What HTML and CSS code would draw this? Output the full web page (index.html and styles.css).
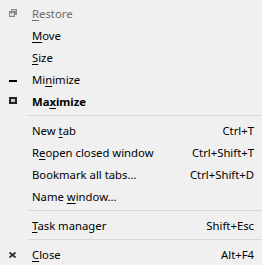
FILE: index.html
```html
<!DOCTYPE html>
<html>
<head>
<meta charset="utf-8">
<link rel="stylesheet" href="styles.css">
</head>
<body>
<div class="menu">
  <div class="item disabled">
    <span class="icon"><svg width="8" height="8" viewBox="0 0 8 8"><path d="M2 0h6v6h-2v-4h-4z" fill="#8a8a8a"/><rect x="0" y="2" width="6" height="6" fill="#8a8a8a"/><rect x="1" y="4" width="4" height="3" fill="#d8d8d8"/><rect x="3" y="1" width="4" height="1" fill="#d8d8d8"/></svg></span>
    <span class="label"><u>R</u>estore</span>
  </div>
  <div class="item"><span class="icon"></span><span class="label"><u>M</u>ove</span></div>
  <div class="item"><span class="icon"></span><span class="label"><u>S</u>ize</span></div>
  <div class="item">
    <span class="icon"><svg width="8" height="8" viewBox="0 0 8 8"><rect x="0" y="5" width="8" height="2" fill="#000"/></svg></span>
    <span class="label">Mi<u>n</u>imize</span>
  </div>
  <div class="item bold">
    <span class="icon"><svg width="8" height="8" viewBox="0 0 8 8"><rect x="0" y="0" width="8" height="7" fill="#222"/><rect x="2" y="2" width="4" height="3" fill="#c8c8c8"/></svg></span>
    <span class="label">Ma<u>x</u>imize</span>
  </div>
  <div class="sep"></div>
  <div class="item"><span class="icon"></span><span class="label">New <u>t</u>ab</span><span class="key">Ctrl+T</span></div>
  <div class="item"><span class="icon"></span><span class="label">R<u>e</u>open closed window</span><span class="key">Ctrl+Shift+T</span></div>
  <div class="item"><span class="icon"></span><span class="label">Bookmark all tabs...</span><span class="key">Ctrl+Shift+D</span></div>
  <div class="item"><span class="icon"></span><span class="label">Name <u>w</u>indow...</span></div>
  <div class="sep"></div>
  <div class="item"><span class="icon"></span><span class="label"><u>T</u>ask manager</span><span class="key">Shift+Esc</span></div>
  <div class="sep"></div>
  <div class="item">
    <span class="icon"><svg width="8" height="8" viewBox="0 0 8 8"><path d="M0.5 2.5L6.5 7.5M6.5 2.5L0.5 7.5" stroke="#333" stroke-width="1.8"/></svg></span>
    <span class="label"><u>C</u>lose</span><span class="key">Alt+F4</span>
  </div>
</div>
</body>
</html>
```
FILE: styles.css
```css
html, body {
  margin: 0;
  padding: 0;
  background: #f0f0f0;
}
.menu {
  width: 262px;
  height: 265px;
  padding-top: 2px;
  box-sizing: border-box;
  font-family: "Noto Sans", "Liberation Sans", sans-serif;
  font-size: 11.3px;
  color: #000;
  overflow: hidden;
}
.item {
  display: flex;
  align-items: center;
  height: 22px;
  padding-right: 8px;
}
.icon {
  width: 32px;
  flex: none;
  display: flex;
  align-items: center;
  padding-left: 9px;
  box-sizing: border-box;
}
.icon svg { display: block; }
.label {
  flex: 1;
  white-space: nowrap;
}
.key {
  white-space: nowrap;
}
.disabled { color: #6d6d6d; }
.bold { font-weight: bold; }
u { text-decoration-thickness: 1px; text-underline-offset: 2px; }
.sep {
  height: 7px;
  display: flex;
  align-items: center;
  margin-left: 28px;
}
.sep::before {
  content: "";
  flex: 1;
  height: 1px;
  background: #d7d7d7;
}
```
